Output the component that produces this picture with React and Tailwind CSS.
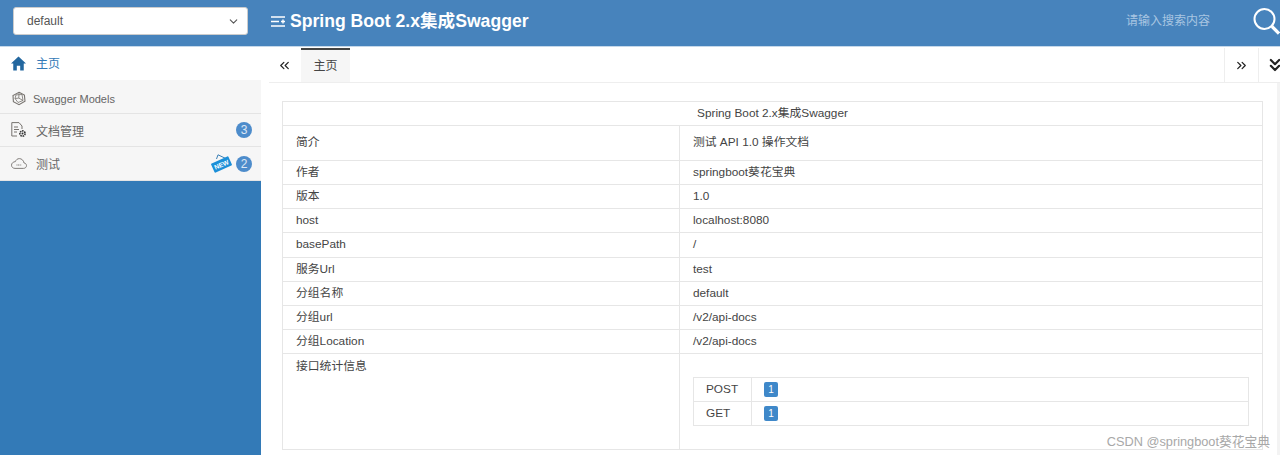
import { ChevronsLeft, ChevronsRight, ChevronsDown, ChevronDown } from 'lucide-react';

const FONT = "font-['Liberation_Sans','Noto_Sans_CJK_SC',sans-serif]";

const rows = [
  ['简介', '测试 API 1.0 操作文档', 'h-[35px]'],
  ['作者', 'springboot葵花宝典', 'h-6'],
  ['版本', '1.0', 'h-6'],
  ['host', 'localhost:8080', 'h-6'],
  ['basePath', '/', 'h-[25px]'],
  ['服务Url', 'test', 'h-6'],
  ['分组名称', 'default', 'h-6'],
  ['分组url', '/v2/api-docs', 'h-6'],
  ['分组Location', '/v2/api-docs', 'h-6'],
];

function HomeIcon() {
  return (
    <svg width="15" height="15" viewBox="0 0 16 15" className="shrink-0">
      <path d="M8 0 L16 7.6 L13.6 7.6 V15 H9.8 V10 H6.2 V15 H2.4 V7.6 L0 7.6 Z" fill="#23679f" />
    </svg>
  );
}

function ModelsIcon() {
  return (
    <svg width="14" height="15" viewBox="0 0 14 14" fill="none" stroke="#77736f" strokeWidth="1.1" className="shrink-0">
      <path d="M7 .8 L12.4 3.6 L13 9.6 L7 13.2 L1.4 10.2 L1 4 Z" />
      <path d="M4 3.4 L10 3 L11 9 L6 11 L3 7 Z M7 .8 L6.8 6.6 M3 7 L6.8 6.6 L11 9" strokeWidth=".8" />
    </svg>
  );
}

function DocIcon() {
  return (
    <svg width="16" height="16" viewBox="0 0 16 16" fill="none" className="shrink-0">
      <path d="M11 7 V4 L8 .6 H.8 V14 H6" stroke="#77736f" />
      <path d="M3 5 H7 M3 7.5 H8 M3 10 H6" stroke="#77736f" />
      <circle cx="11.5" cy="11.5" r="2.6" stroke="#333" strokeWidth="1.6" strokeDasharray="1.6 .7" />
      <circle cx="11.5" cy="11.5" r="1" fill="#333" />
    </svg>
  );
}

function CloudIcon() {
  return (
    <svg width="16" height="11" viewBox="0 0 16 11" fill="none" stroke="#77736f" strokeWidth=".9" className="shrink-0">
      <path d="M4 10.4 H12.4 C14.4 10.4 15.5 9 15.5 7.6 C15.5 6.2 14.4 5 13 5 C12.6 2.4 10.6 .6 8.4 .6 C6.4 .6 5 1.8 4.4 3.6 C2.2 3.8 .5 5.2 .5 7.2 C.5 9 2 10.4 4 10.4 Z" />
      <path d="M5.5 7 H10.5" strokeWidth="1.2" strokeDasharray="1 .6" />
    </svg>
  );
}

function NewTag() {
  return (
    <svg width="21" height="19" viewBox="0 0 21 19" className="shrink-0">
      <path d="M5.5 5 L7 .8 L15 4.6" fill="none" stroke="#3a7fb5" strokeWidth="1" />
      <g transform="rotate(-24 10.5 10.5)">
        <rect x="1" y="5.5" width="19" height="10" rx="1" fill="#1b8fd8" />
        <text x="10.5" y="13" textAnchor="middle" fontSize="6.5" fontWeight="700" fill="#fff" fontFamily="Liberation Sans">NEW</text>
      </g>
    </svg>
  );
}

function SearchIcon() {
  return (
    <svg width="28" height="27" viewBox="0 0 28 27" fill="none" stroke="#fff" className="shrink-0">
      <circle cx="12.5" cy="11" r="10" strokeWidth="2" />
      <path d="M20 18.5 L27 25.5" strokeWidth="3.2" />
    </svg>
  );
}

function Count({ n }) {
  return (
    <span className="flex h-4 w-4 shrink-0 items-center justify-center rounded-full bg-[#4d8ccb] text-[12px] text-white/80">{n}</span>
  );
}

function SideItem({ icon, label, extra, className }) {
  return (
    <div className={`flex items-center border-b border-[#e4e4e4] bg-[#f6f6f6] text-[#666] ${className}`}>
      {icon}
      <span className="pt-[3px]">{label}</span>
      <span className="ml-auto flex items-center gap-[4px] pr-[9px]">{extra}</span>
    </div>
  );
}

export default function App() {
  return (
    <div className={`flex h-[455px] w-[1280px] flex-col overflow-hidden bg-white ${FONT} relative`}>
      {/* top bar */}
      <header className="flex h-[47px] shrink-0 items-center border-b border-[#c5d8ea] bg-[#4783bc] pb-[4px]">
        <div className="w-[261px] shrink-0 pl-[13px]">
          <div className="flex h-[28px] w-[235px] items-center justify-between rounded-[3px] border border-[#ccc] bg-white pl-[13px] pr-[7px] text-[12px] text-[#555]">
            default
            <ChevronDown size={13} strokeWidth={2} color="#555" />
          </div>
        </div>
        <svg width="14" height="11" viewBox="0 0 14 11" stroke="#fff" strokeWidth="1.4" className="ml-[10px] shrink-0">
          <path d="M0 1 H14 M0 5.5 H8 M10 5.5 H14 M12 3.5 V7.5 M0 10 H14" />
        </svg>
        <span className="ml-[5px] text-[17.6px] font-bold text-white">Spring Boot 2.x集成Swagger</span>
        <span className="ml-auto mr-[42px] text-[12px] text-[#a9c6e2]">请输入搜索内容</span>
        <SearchIcon />
      </header>

      <div className="flex min-h-0 flex-1">
        {/* left menu */}
        <aside className="flex w-[261px] shrink-0 flex-col bg-[#337ab7]">
          <div className="flex h-[33px] items-center gap-[10px] bg-white pl-[11px] text-[12px] text-[#337ab7]">
            <HomeIcon />
            <span className="pt-px">主页</span>
          </div>
          <SideItem className="h-[34px] gap-[7px] pl-[12px] pt-[3px] text-[11px]" icon={<ModelsIcon />} label="Swagger Models" />
          <SideItem className="h-[33px] gap-[9px] pl-[11px] text-[12px]" icon={<DocIcon />} label="文档管理" extra={<Count n={3} />} />
          <SideItem className="h-[34px] gap-[9px] pl-[11px] text-[12px]" icon={<CloudIcon />} label="测试" extra={<><NewTag /><Count n={2} /></>} />
        </aside>

        {/* content */}
        <main className="flex min-w-0 flex-1 flex-col">
          <div className="ml-[8px] flex h-[36px] shrink-0 items-stretch border-b border-[#eee] pt-px">
            <div className="flex w-[32px] items-center justify-center pr-px">
              <ChevronsLeft size={15} color="#222" />
            </div>
            <div className="flex w-[49px] items-center justify-center border-t-2 border-[#444] bg-[#f6f6f6] text-[12px] text-[#444]">主页</div>
            <div className="ml-auto flex w-[34px] items-center justify-center border-l border-[#eee]">
              <ChevronsRight size={15} color="#222" />
            </div>
            <div className="flex w-[22px] items-center overflow-hidden border-l border-[#eee] pl-[6px]">
              <ChevronsDown size={20} strokeWidth={2.6} color="#222" className="shrink-0" />
            </div>
          </div>

          <div className="flex min-h-0 flex-1">
            <div className="flex-1 pl-[21px] pt-[18px]">
              <table className="w-[981px] table-fixed border-collapse border border-[#e6e6e6] text-[11.8px] text-[#444]">
                <colgroup>
                  <col className="w-[397px]" />
                  <col />
                </colgroup>
                <tbody>
                  <tr className="h-6">
                    <td colSpan={2} className="border border-[#e6e6e6] text-center">Spring Boot 2.x集成Swagger</td>
                  </tr>
                  {rows.map(([k, v, h]) => (
                    <tr key={k} className={h}>
                      <td className="border border-[#e6e6e6] pl-[13px]">{k}</td>
                      <td className="border border-[#e6e6e6] pl-[13px]">{v}</td>
                    </tr>
                  ))}
                  <tr className="h-[96px]">
                    <td className="border border-[#e6e6e6] pl-[13px] pt-[4px] align-top">接口统计信息</td>
                    <td className="border border-[#e6e6e6] px-[13px] pt-[23px] align-top">
                      <table className="w-full table-fixed border-collapse border border-[#e6e6e6]">
                        <colgroup>
                          <col className="w-[58px]" />
                          <col />
                        </colgroup>
                        <tbody>
                          {['POST', 'GET'].map(m => (
                            <tr key={m} className="h-6">
                              <td className="border border-[#e6e6e6] pl-[12px]">{m}</td>
                              <td className="border border-[#e6e6e6] pl-[12px]">
                                <span className="flex h-[15px] w-[14px] items-center justify-center rounded-[2px] bg-[#3f88c9] text-[10px] text-white">1</span>
                              </td>
                            </tr>
                          ))}
                        </tbody>
                      </table>
                    </td>
                  </tr>
                </tbody>
              </table>
            </div>
            {/* scroll gutter */}
            <div className="w-[3px] shrink-0 bg-[#f3f3f3]" />
          </div>
        </main>
      </div>

      {/* watermark */}
      <span className="absolute right-[10px] top-[434px] text-[12.75px] leading-[15px] text-[#a8a8a8]">CSDN @springboot葵花宝典</span>
    </div>
  );
}
